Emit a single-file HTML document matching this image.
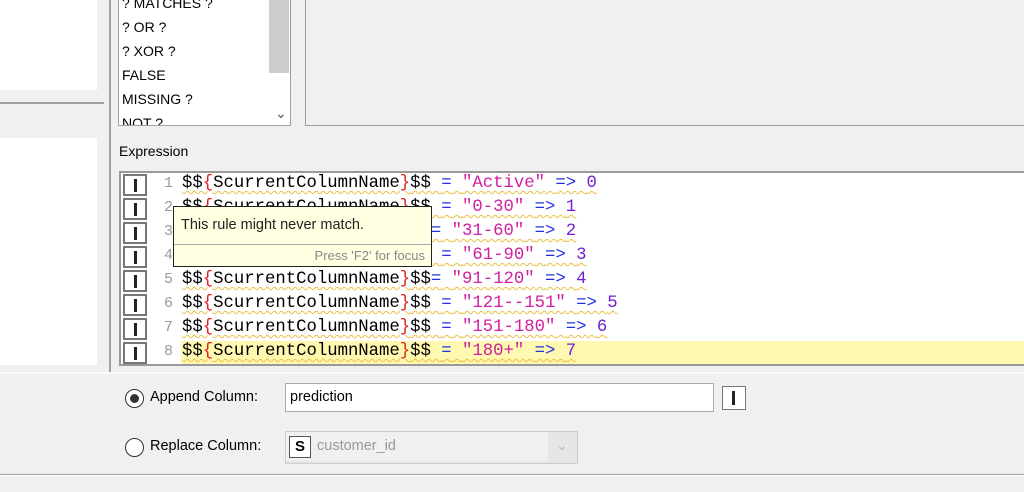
<!DOCTYPE html>
<html><head><style>
*{margin:0;padding:0;box-sizing:border-box}
body{width:1024px;height:492px;background:#f0f0f0;position:relative;overflow:hidden;font-family:"Liberation Sans",sans-serif;font-size:14px;color:#000}
.abs{position:absolute}
.list div{height:24px;line-height:24px;font-size:14px;padding-left:3px}
.code{font-family:"Liberation Mono",monospace;font-size:17.3px;white-space:pre}
.row{position:absolute;left:0;height:24px;width:905px}
.gi{position:absolute;left:2px;top:1px;width:24px;height:22px;border:2px solid #777;background:#fff}
.gi:after{content:"";position:absolute;left:9px;top:3px;width:3px;height:13px;background:#222}
.ln{position:absolute;left:36px;width:16px;text-align:right;color:#999;font-family:"Liberation Mono",monospace;font-size:15px;top:2px}
.tx{position:absolute;left:61px;top:0;line-height:22px;text-decoration:underline wavy #e8c040;text-decoration-thickness:1px;text-underline-offset:3px}
.r{color:#e02020}.b{color:#2030e0}.m{color:#d020a0}.p{color:#7020d0}
</style></head><body>
<div class="abs" style="left:0;top:0;width:97px;height:90px;background:#fff"></div>
<div class="abs" style="left:0;top:102px;width:104px;height:2px;background:#a0a0a0"></div>
<div class="abs" style="left:0;top:138px;width:97px;height:227px;background:#fff"></div>
<div class="abs" style="left:109px;top:0;width:2px;height:372px;background:#a0a0a0"></div>
<div class="abs list" style="left:118px;top:-10px;width:173px;height:136px;background:#fff;border:1px solid #a0a0a0;overflow:hidden">
<div>? MATCHES ?</div><div>? OR ?</div><div>? XOR ?</div><div>FALSE</div><div>MISSING ?</div><div>NOT ?</div>
<div class="abs" style="left:150px;top:0;width:20px;height:82px;background:#cdcdcd"></div>
<div class="abs" style="left:153px;top:110px;font-size:14px;color:#555">&#8964;</div>
</div>
<div class="abs" style="left:305px;top:-2px;width:725px;height:128px;border:1px solid #a0a0a0"></div>
<div class="abs" style="left:119px;top:143px;font-size:14px">Expression</div>
<div class="abs code" style="left:119px;top:171px;width:905px;height:195px;background:#fff;border:2px solid #999;border-right:none;overflow:hidden">
<div class="abs" style="left:60px;top:168px;width:845px;height:24px;background:#fff8b0"></div>
<div class="row" style="top:0"><div class="gi"></div><div class="ln">1</div><div class="tx">$$<span class="r">{</span>ScurrentColumnName<span class="r">}</span>$$ <span class="b">=</span> <span class="m">"Active"</span> <span class="b">=&gt;</span> <span class="p">0</span></div></div>
<div class="row" style="top:24px"><div class="gi"></div><div class="ln">2</div><div class="tx">$$<span class="r">{</span>ScurrentColumnName<span class="r">}</span>$$ <span class="b">=</span> <span class="m">"0-30"</span> <span class="b">=&gt;</span> <span class="p">1</span></div></div>
<div class="row" style="top:48px"><div class="gi"></div><div class="ln">3</div><div class="tx">$$<span class="r">{</span>ScurrentColumnName<span class="r">}</span>$$<span class="b">=</span> <span class="m">"31-60"</span> <span class="b">=&gt;</span> <span class="p">2</span></div></div>
<div class="row" style="top:72px"><div class="gi"></div><div class="ln">4</div><div class="tx">$$<span class="r">{</span>ScurrentColumnName<span class="r">}</span>$$ <span class="b">=</span> <span class="m">"61-90"</span> <span class="b">=&gt;</span> <span class="p">3</span></div></div>
<div class="row" style="top:96px"><div class="gi"></div><div class="ln">5</div><div class="tx">$$<span class="r">{</span>ScurrentColumnName<span class="r">}</span>$$<span class="b">=</span> <span class="m">"91-120"</span> <span class="b">=&gt;</span> <span class="p">4</span></div></div>
<div class="row" style="top:120px"><div class="gi"></div><div class="ln">6</div><div class="tx">$$<span class="r">{</span>ScurrentColumnName<span class="r">}</span>$$ <span class="b">=</span> <span class="m">"121--151"</span> <span class="b">=&gt;</span> <span class="p">5</span></div></div>
<div class="row" style="top:144px"><div class="gi"></div><div class="ln">7</div><div class="tx">$$<span class="r">{</span>ScurrentColumnName<span class="r">}</span>$$ <span class="b">=</span> <span class="m">"151-180"</span> <span class="b">=&gt;</span> <span class="p">6</span></div></div>
<div class="row" style="top:168px"><div class="gi"></div><div class="ln">8</div><div class="tx">$$<span class="r">{</span>ScurrentColumnName<span class="r">}</span>$$ <span class="b">=</span> <span class="m">"180+"</span> <span class="b">=&gt;</span> <span class="p">7</span></div></div>
</div>
<div class="abs" style="left:173px;top:206px;width:259px;height:61px;background:#ffffe1;border:1px solid #222">
<div class="abs" style="left:7px;top:10px;font-size:14.5px;color:#222">This rule might never match.</div>
<div class="abs" style="left:0;top:37px;width:257px;height:1px;background:#aaa"></div>
<div class="abs" style="right:6px;top:41px;font-size:13px;color:#888">Press 'F2' for focus</div>
</div>
<div class="abs" style="left:0;top:372px;width:1024px;height:2px;background:#fafafa"></div>
<div class="abs" style="left:125px;top:389px;width:19px;height:19px;border:1px solid #333;border-radius:50%;background:#fff"><div class="abs" style="left:4px;top:4px;width:9px;height:9px;border-radius:50%;background:#333"></div></div>
<div class="abs" style="left:150px;top:389px;font-size:14.5px">Append Column:</div>
<div class="abs" style="left:285px;top:383px;width:429px;height:29px;background:#fff;border:1px solid #aaa;padding:5px 4px;font-size:14.5px">prediction</div>
<div class="abs" style="left:722px;top:386px;width:24px;height:24px;background:#fff;border:1px solid #777"><div class="abs" style="left:9px;top:4px;width:3px;height:14px;background:#222"></div></div>
<div class="abs" style="left:125px;top:438px;width:19px;height:19px;border:1px solid #333;border-radius:50%;background:#fff"></div>
<div class="abs" style="left:150px;top:438px;font-size:14.5px">Replace Column:</div>
<div class="abs" style="left:285px;top:431px;width:293px;height:33px;background:#e6e6e6;border:1px solid #ccc"></div>
<div class="abs" style="left:286px;top:432px;width:262px;height:29px;background:#f0f0f0"></div>
<div class="abs" style="left:289px;top:436px;width:22px;height:22px;border:1px solid #555;background:#fff;font-weight:bold;font-size:15px;text-align:center;line-height:20px">S</div>
<div class="abs" style="left:317px;top:438px;font-size:14.5px;color:#999">customer_id</div>
<div class="abs" style="left:556px;top:437px;font-size:14px;color:#bbb">&#8964;</div>
<div class="abs" style="left:0;top:474px;width:1024px;height:1px;background:#a0a0a0"></div>
<div class="abs" style="left:0;top:475px;width:1024px;height:1px;background:#fff"></div>
</body></html>
